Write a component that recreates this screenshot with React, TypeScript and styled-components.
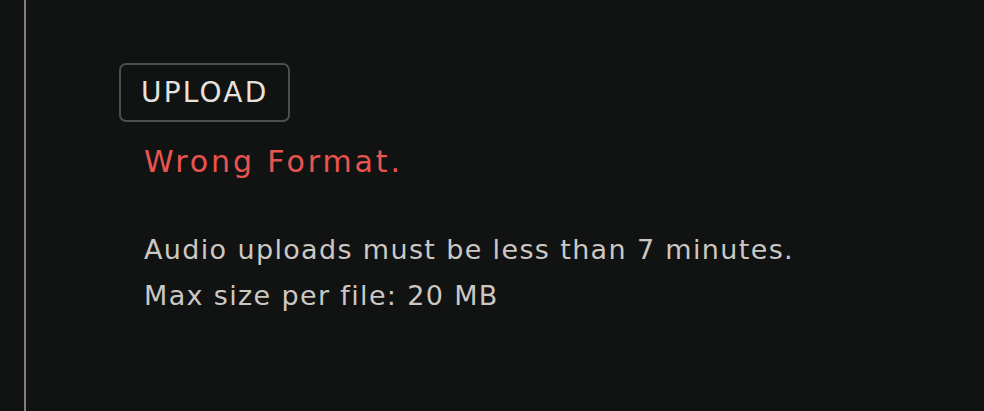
import React from "react";
import styled, { createGlobalStyle } from "styled-components";

const GlobalStyle = createGlobalStyle`
  html, body { margin: 0; padding: 0; background: #111212; }
  body { font-family: "DejaVu Sans", "Open Sans", sans-serif; }
`;

const Page = styled.div`
  display: flex;
  min-height: 100vh;
  background: #111212;
`;

const Rail = styled.div`
  width: 24px;
  flex: none;
  border-right: 2px solid #857d76;
`;

const Main = styled.main`
  flex: 1;
  padding: 63px 0 0 93px;
  display: flex;
  flex-direction: column;
  align-items: flex-start;
`;

const UploadButton = styled.button`
  height: 59px;
  box-sizing: border-box;
  padding: 0 20px 0 20px;
  border: 2px solid #4a4f51;
  border-radius: 7px;
  background: transparent;
  color: #e6e3de;
  font-family: "DejaVu Sans", "Open Sans", sans-serif;
  font-size: 28px;
  letter-spacing: 2.2px;
  line-height: 55px;
  cursor: pointer;
`;

const Messages = styled.div`
  padding-left: 25px;
  display: flex;
  flex-direction: column;
`;

const ErrorText = styled.p`
  margin: 20px 0 0;
  color: #e8544f;
  font-size: 30px;
  line-height: 40px;
  letter-spacing: 2.9px;
  white-space: nowrap;
`;

const Info = styled.p`
  margin: 45px 0 0;
  color: #cbc8c3;
  font-size: 27px;
  line-height: 46px;
  letter-spacing: 1.35px;
  white-space: nowrap;
`;

export default function App() {
  return (
    <Page>
      <GlobalStyle />
      <Rail />
      <Main>
        <UploadButton type="button">UPLOAD</UploadButton>
        <Messages>
          <ErrorText>Wrong Format.</ErrorText>
          <Info>
            Audio uploads must be less than 7 minutes.
            <br />
            Max size per file: 20 MB
          </Info>
        </Messages>
      </Main>
    </Page>
  );
}
